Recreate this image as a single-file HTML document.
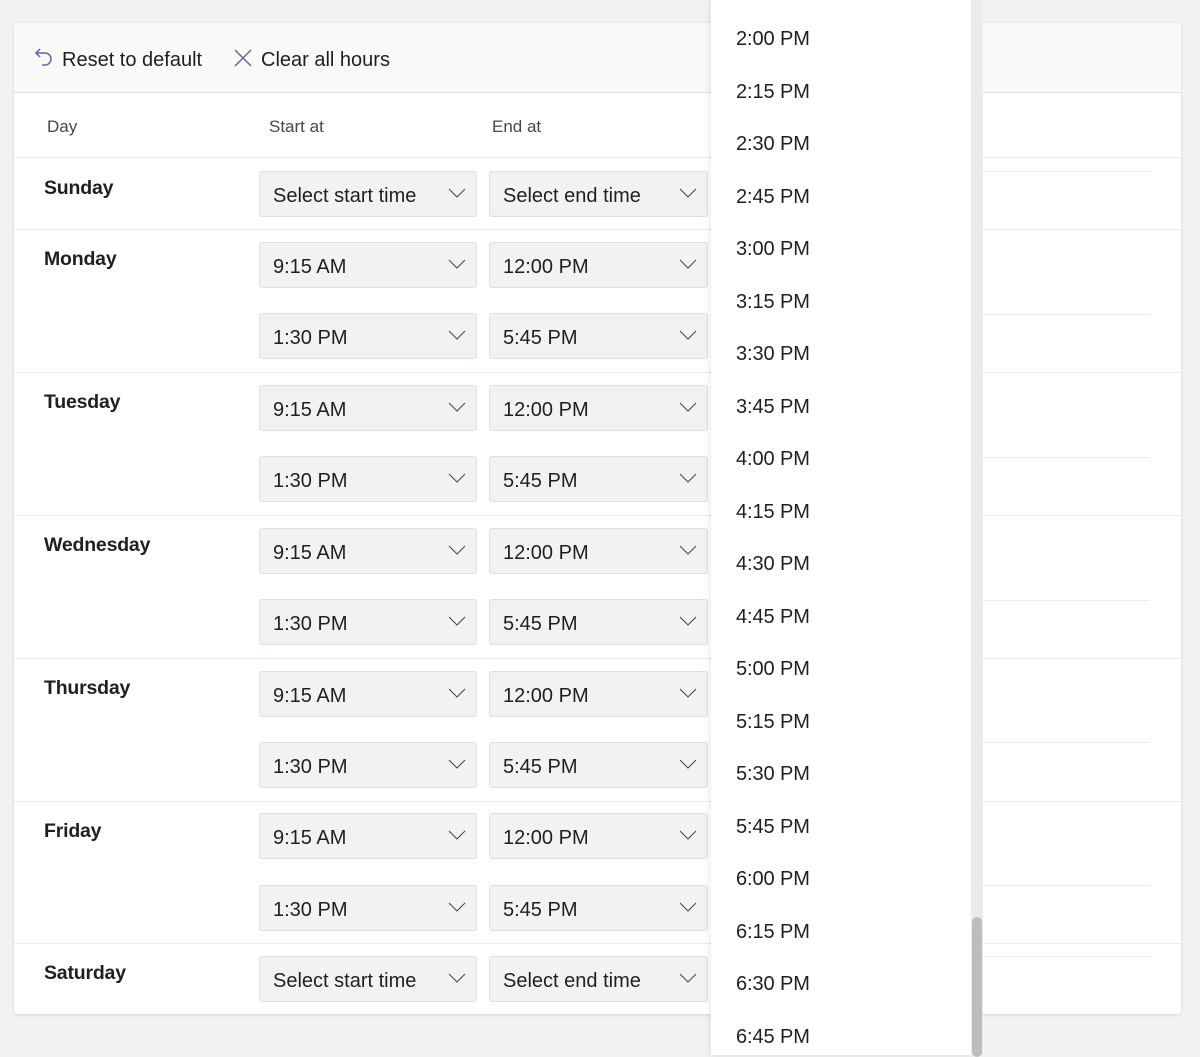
<!DOCTYPE html>
<html><head><meta charset="utf-8"><style>
body{margin:0;width:1200px;height:1055px;overflow:hidden;background:#f3f2f1;font-family:"Segoe UI","Liberation Sans",sans-serif;color:#201f1e;position:relative}
.card{position:absolute;left:14px;top:23px;width:1167px;height:991px;background:#fff;border-radius:3px;box-shadow:0 1px 3px rgba(0,0,0,.12)}
.hdr{position:absolute;left:14px;top:23px;width:1167px;height:69px;background:#faf9f8;border-bottom:1px solid #e1dfdd;border-radius:3px 3px 0 0}
.t{position:absolute;white-space:nowrap}
.hl{position:absolute;left:14px;width:1167px;height:1px;background:#edebe9}
.pl{position:absolute;left:980px;width:170px;height:1px;background:#edebe9}
.day{position:absolute;left:44px;font-size:19.5px;font-weight:bold;line-height:26px;margin-top:1px;letter-spacing:-0.2px}
.sel{position:absolute;height:44px;border:1px solid #e1dfdd;border-radius:3px;background:#f3f2f1;font-size:20px;line-height:48px;box-sizing:content-box}
.sel span{position:absolute;left:13px;top:0}
.sel svg{position:absolute;right:10px;top:16px}
.s{left:259px;width:216px}.e{left:489px;width:217px}
.dd{position:absolute;left:711px;top:0;width:260px;height:1055px;background:#fff;box-shadow:0 0 8px rgba(0,0,0,.12)}
.dd div{position:absolute;left:25px;font-size:20px;line-height:30px;letter-spacing:-0.1px;margin-top:2px}
.tr{position:absolute;left:971px;top:0;width:12px;height:1055px;background:#ebebeb}
.th{position:absolute;left:972px;top:917px;width:10px;height:140px;background:#bdbdbd;border-radius:5px}
</style></head><body>
<div class="card"></div>
<div class="hdr"></div>
<svg class="t" style="left:34px;top:47px" width="20" height="22" viewBox="0 0 20 22"><path d="M6 2 L2 6 L6 10 M2 6 H11 A6 6 0 0 1 11 18 H8" fill="none" stroke="#6264a7" stroke-width="1.5"/></svg>
<div class="t" style="left:62px;top:47px;font-size:20px;line-height:26px">Reset to default</div>
<svg class="t" style="left:234px;top:49px" width="18" height="18" viewBox="0 0 18 18"><path d="M1 1L17 17M17 1L1 17" stroke="#6264a7" stroke-width="1.5"/></svg>
<div class="t" style="left:261px;top:47px;font-size:20px;line-height:26px">Clear all hours</div>
<div class="t" style="left:47px;top:117px;font-size:17px;color:#484644">Day</div>
<div class="t" style="left:269px;top:117px;font-size:17px;color:#484644">Start at</div>
<div class="t" style="left:492px;top:117px;font-size:17px;color:#484644">End at</div>

<div class="hl" style="top:157px"></div><div class="hl" style="top:229px"></div><div class="hl" style="top:372px"></div><div class="hl" style="top:515px"></div><div class="hl" style="top:658px"></div><div class="hl" style="top:801px"></div><div class="hl" style="top:943px"></div>
<div class="pl" style="top:171px"></div><div class="pl" style="top:314px"></div><div class="pl" style="top:457px"></div><div class="pl" style="top:600px"></div><div class="pl" style="top:742px"></div><div class="pl" style="top:885px"></div><div class="pl" style="top:956px"></div>

<div class="day" style="top:174px">Sunday</div>
<div class="day" style="top:245px">Monday</div>
<div class="day" style="top:388px">Tuesday</div>
<div class="day" style="top:531px">Wednesday</div>
<div class="day" style="top:674px">Thursday</div>
<div class="day" style="top:817px">Friday</div>
<div class="day" style="top:959px">Saturday</div>

<div class="sel s" style="top:171px"><span>Select start time</span><svg width="18" height="10"><path d="M1 1L9 9L17 1" fill="none" stroke="#484644" stroke-width="1"/></svg></div>
<div class="sel e" style="top:171px"><span>Select end time</span><svg width="18" height="10"><path d="M1 1L9 9L17 1" fill="none" stroke="#484644" stroke-width="1"/></svg></div>

<div class="sel s" style="top:242px"><span>9:15 AM</span><svg width="18" height="10"><path d="M1 1L9 9L17 1" fill="none" stroke="#484644" stroke-width="1"/></svg></div>
<div class="sel e" style="top:242px"><span>12:00 PM</span><svg width="18" height="10"><path d="M1 1L9 9L17 1" fill="none" stroke="#484644" stroke-width="1"/></svg></div>
<div class="sel s" style="top:313px"><span>1:30 PM</span><svg width="18" height="10"><path d="M1 1L9 9L17 1" fill="none" stroke="#484644" stroke-width="1"/></svg></div>
<div class="sel e" style="top:313px"><span>5:45 PM</span><svg width="18" height="10"><path d="M1 1L9 9L17 1" fill="none" stroke="#484644" stroke-width="1"/></svg></div>

<div class="sel s" style="top:385px"><span>9:15 AM</span><svg width="18" height="10"><path d="M1 1L9 9L17 1" fill="none" stroke="#484644" stroke-width="1"/></svg></div>
<div class="sel e" style="top:385px"><span>12:00 PM</span><svg width="18" height="10"><path d="M1 1L9 9L17 1" fill="none" stroke="#484644" stroke-width="1"/></svg></div>
<div class="sel s" style="top:456px"><span>1:30 PM</span><svg width="18" height="10"><path d="M1 1L9 9L17 1" fill="none" stroke="#484644" stroke-width="1"/></svg></div>
<div class="sel e" style="top:456px"><span>5:45 PM</span><svg width="18" height="10"><path d="M1 1L9 9L17 1" fill="none" stroke="#484644" stroke-width="1"/></svg></div>

<div class="sel s" style="top:528px"><span>9:15 AM</span><svg width="18" height="10"><path d="M1 1L9 9L17 1" fill="none" stroke="#484644" stroke-width="1"/></svg></div>
<div class="sel e" style="top:528px"><span>12:00 PM</span><svg width="18" height="10"><path d="M1 1L9 9L17 1" fill="none" stroke="#484644" stroke-width="1"/></svg></div>
<div class="sel s" style="top:599px"><span>1:30 PM</span><svg width="18" height="10"><path d="M1 1L9 9L17 1" fill="none" stroke="#484644" stroke-width="1"/></svg></div>
<div class="sel e" style="top:599px"><span>5:45 PM</span><svg width="18" height="10"><path d="M1 1L9 9L17 1" fill="none" stroke="#484644" stroke-width="1"/></svg></div>

<div class="sel s" style="top:671px"><span>9:15 AM</span><svg width="18" height="10"><path d="M1 1L9 9L17 1" fill="none" stroke="#484644" stroke-width="1"/></svg></div>
<div class="sel e" style="top:671px"><span>12:00 PM</span><svg width="18" height="10"><path d="M1 1L9 9L17 1" fill="none" stroke="#484644" stroke-width="1"/></svg></div>
<div class="sel s" style="top:742px"><span>1:30 PM</span><svg width="18" height="10"><path d="M1 1L9 9L17 1" fill="none" stroke="#484644" stroke-width="1"/></svg></div>
<div class="sel e" style="top:742px"><span>5:45 PM</span><svg width="18" height="10"><path d="M1 1L9 9L17 1" fill="none" stroke="#484644" stroke-width="1"/></svg></div>

<div class="sel s" style="top:813px"><span>9:15 AM</span><svg width="18" height="10"><path d="M1 1L9 9L17 1" fill="none" stroke="#484644" stroke-width="1"/></svg></div>
<div class="sel e" style="top:813px"><span>12:00 PM</span><svg width="18" height="10"><path d="M1 1L9 9L17 1" fill="none" stroke="#484644" stroke-width="1"/></svg></div>
<div class="sel s" style="top:885px"><span>1:30 PM</span><svg width="18" height="10"><path d="M1 1L9 9L17 1" fill="none" stroke="#484644" stroke-width="1"/></svg></div>
<div class="sel e" style="top:885px"><span>5:45 PM</span><svg width="18" height="10"><path d="M1 1L9 9L17 1" fill="none" stroke="#484644" stroke-width="1"/></svg></div>

<div class="sel s" style="top:956px"><span>Select start time</span><svg width="18" height="10"><path d="M1 1L9 9L17 1" fill="none" stroke="#484644" stroke-width="1"/></svg></div>
<div class="sel e" style="top:956px"><span>Select end time</span><svg width="18" height="10"><path d="M1 1L9 9L17 1" fill="none" stroke="#484644" stroke-width="1"/></svg></div>

<div class="dd">
<div style="top:22px">2:00 PM</div>
<div style="top:75px">2:15 PM</div>
<div style="top:127px">2:30 PM</div>
<div style="top:180px">2:45 PM</div>
<div style="top:232px">3:00 PM</div>
<div style="top:285px">3:15 PM</div>
<div style="top:337px">3:30 PM</div>
<div style="top:390px">3:45 PM</div>
<div style="top:442px">4:00 PM</div>
<div style="top:495px">4:15 PM</div>
<div style="top:547px">4:30 PM</div>
<div style="top:600px">4:45 PM</div>
<div style="top:652px">5:00 PM</div>
<div style="top:705px">5:15 PM</div>
<div style="top:757px">5:30 PM</div>
<div style="top:810px">5:45 PM</div>
<div style="top:862px">6:00 PM</div>
<div style="top:915px">6:15 PM</div>
<div style="top:967px">6:30 PM</div>
<div style="top:1020px">6:45 PM</div>
</div>
<div class="tr"></div><div class="th"></div>
</body></html>
